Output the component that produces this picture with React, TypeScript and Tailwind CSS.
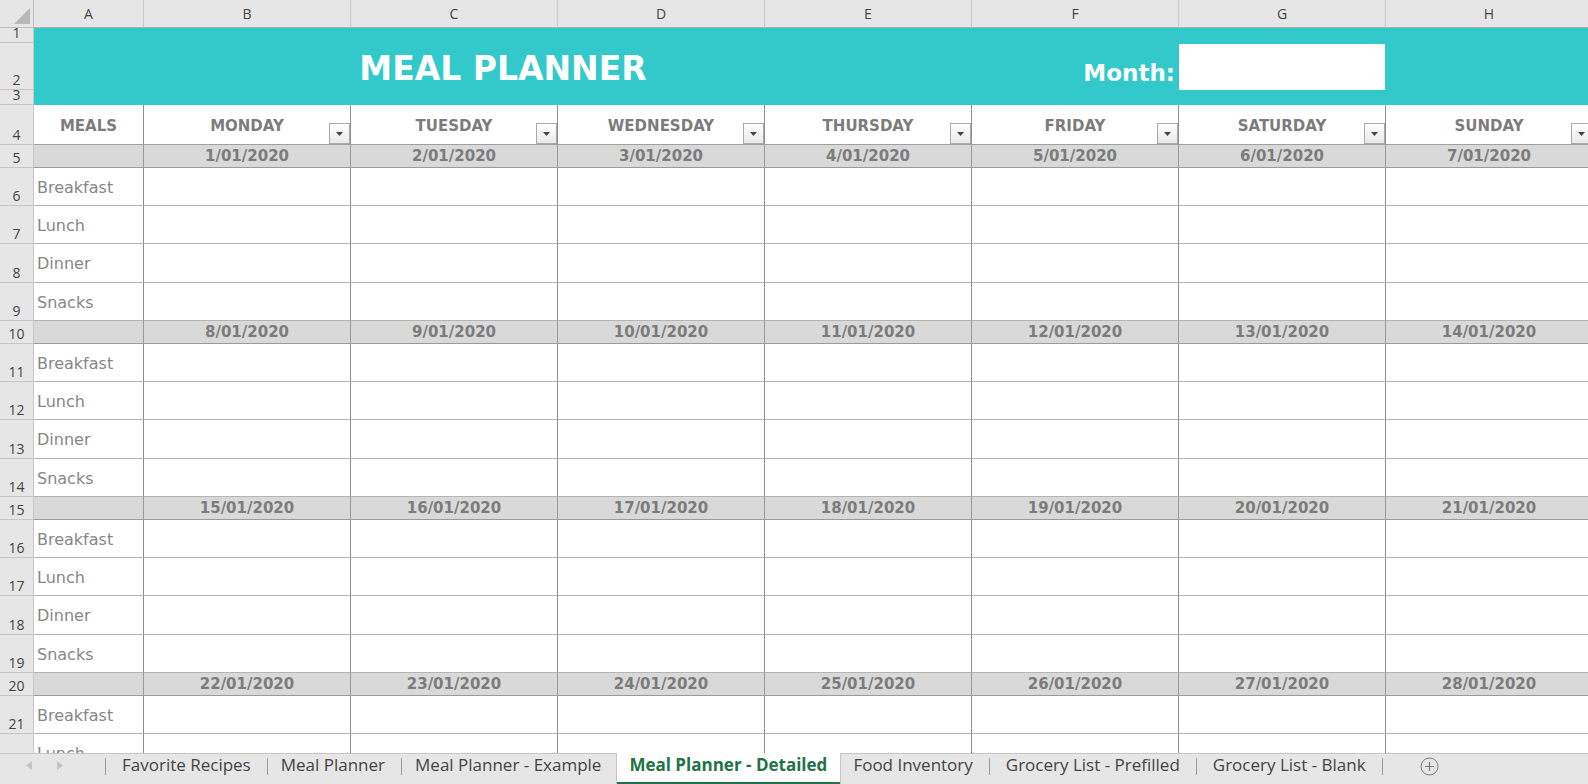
import React from "react";

const cols = ["A", "B", "C", "D", "E", "F", "G", "H"];
const days = ["MONDAY", "TUESDAY", "WEDNESDAY", "THURSDAY", "FRIDAY", "SATURDAY", "SUNDAY"];
const meals = ["Breakfast", "Lunch", "Dinner", "Snacks"];
const mealHeights = ["h-[38px]", "h-[38px]", "h-[39px]", "h-[38px]"];
const weekStarts = [1, 8, 15, 22];
const tabs = ["Favorite Recipes", "Meal Planner", "Meal Planner - Example", "Meal Planner - Detailed", "Food Inventory", "Grocery List - Prefilled", "Grocery List - Blank"];

const sheetFont = { fontFamily: '"DejaVu Sans", sans-serif' };

const RowNum = ({ n, h }: { n: number; h: string }) => (
  <div className={`w-[34px] shrink-0 ${h} bg-[#e6e6e6] border-b border-r border-[#c6c6c6] flex items-end justify-center pb-[2px] text-[14px] leading-none text-[#444] font-['Open_Sans',sans-serif]`}>
    {n}
  </div>
);

const FilterButton = () => (
  <div className="absolute right-0 bottom-0 w-[21px] h-[21px] border border-[#a9a9a9] bg-gradient-to-b from-white to-[#e9e9e9] flex items-center justify-center">
    <svg width="7" height="4" viewBox="0 0 7 4">
      <path d="M0 0 L7 0 L3.5 4 Z" fill="#444" />
    </svg>
  </div>
);

const DateRow = ({ rowNo, start }: { rowNo: number; start: number }) => (
  <div className="flex">
    <RowNum n={rowNo} h="h-[23px]" />
    <div className="w-[110px] shrink-0 h-[23px] bg-[#d9d9d9] border-r border-b border-[#9a9a9a]" />
    {days.map((d, i) => (
      <div key={d} className="w-[207px] shrink-0 h-[23px] bg-[#d9d9d9] border-r border-b border-[#9a9a9a] flex items-center justify-center pt-[1px] text-[15px] font-bold text-[#7c7c7c]">
        {start + i}/01/2020
      </div>
    ))}
  </div>
);

const MealRow = ({ rowNo, meal, h }: { rowNo: number; meal: string; h: string }) => (
  <div className="flex">
    <RowNum n={rowNo} h={h} />
    <div className={`w-[110px] shrink-0 ${h} bg-white border-r border-r-[#8f8f8f] border-b border-b-[#b4b4b4] flex items-center pl-[3px] pt-[2px] text-[16px] text-[#878787]`}>
      {meal}
    </div>
    {days.map((d) => (
      <div key={d} className={`w-[207px] shrink-0 ${h} bg-white border-r border-r-[#8f8f8f] border-b border-b-[#b4b4b4]`} />
    ))}
  </div>
);

const Sep = () => <div className="w-px bg-[#9a9a9a] mt-[4px] mb-[9px]" />;

export default function App() {
  let rowNo = 5;
  const blocks = weekStarts.map((start) => {
    const dateRow = rowNo;
    rowNo += 5;
    return { start, dateRow };
  });

  return (
    <div className="w-[1588px] h-[784px] overflow-hidden flex flex-col bg-white" style={sheetFont}>
      <div className="flex-1 overflow-hidden">
        {/* column letters */}
        <div className="flex h-[28px]">
          <div className="w-[34px] shrink-0 h-[28px] bg-[#e6e6e6] border-r border-b border-[#bdbdbd] relative">
            <svg className="absolute right-[3px] bottom-[3px]" width="16" height="16" viewBox="0 0 16 16">
              <path d="M16 0 L16 16 L0 16 Z" fill="#b7b7b7" />
            </svg>
          </div>
          {cols.map((c, i) => (
            <div key={c} className={`${i === 0 ? "w-[110px]" : "w-[207px]"} shrink-0 h-[28px] bg-[#e6e6e6] border-r border-r-[#c9c9c9] border-b border-b-[#ababab] flex items-center justify-center text-[14px] text-[#444] font-['Open_Sans',sans-serif]`}>
              {c}
            </div>
          ))}
        </div>

        {/* title rows 1-3 */}
        <div className="flex">
          <div className="flex flex-col">
            <RowNum n={1} h="h-[15px]" />
            <RowNum n={2} h="h-[47px]" />
            <RowNum n={3} h="h-[15px]" />
          </div>
          <div className="flex-1 h-[77px] bg-[#33c9ca] flex items-start">
            <div className="w-[938px] shrink-0 h-[62px] flex items-center justify-center pt-[18px] text-white font-bold text-[33px] leading-none">
              MEAL PLANNER
            </div>
            <div className="w-[207px] shrink-0 h-[62px] flex items-center justify-end pr-[4px] pt-[28px] text-white font-bold text-[23px] leading-none">
              Month:
            </div>
            <div className="w-[206px] shrink-0 h-[46px] mt-[16px] bg-white" />
          </div>
        </div>

        {/* day headers row 4 */}
        <div className="flex">
          <RowNum n={4} h="h-[40px]" />
          <div className="w-[110px] shrink-0 h-[40px] border-r border-r-[#8f8f8f] border-b border-b-[#a0a0a0] flex items-center justify-center pt-[3px] text-[15px] font-bold text-[#7c7c7c]">
            MEALS
          </div>
          {days.map((d) => (
            <div key={d} className="relative w-[207px] shrink-0 h-[40px] border-r border-r-[#8f8f8f] border-b border-b-[#a0a0a0] flex items-center justify-center pt-[3px] text-[15px] font-bold text-[#7c7c7c]">
              {d}
              <FilterButton />
            </div>
          ))}
        </div>

        {blocks.map(({ start, dateRow }) => (
          <div key={start}>
            <DateRow rowNo={dateRow} start={start} />
            {meals.map((m, i) => (
              <MealRow key={m} rowNo={dateRow + 1 + i} meal={m} h={mealHeights[i]} />
            ))}
          </div>
        ))}
      </div>

      {/* sheet tabs */}
      <div className="h-[31px] shrink-0 bg-[#e6e6e6] border-t border-[#c6c6c6] flex items-stretch font-['Open_Sans',sans-serif] text-[17px] text-[#444]">
        <div className="w-[105px] shrink-0 flex items-center gap-[25px] pl-[26px] pb-[7px]">
          <svg width="6" height="9" viewBox="0 0 6 9"><path d="M6 0 L0 4.5 L6 9 Z" fill="#c4c4c4" /></svg>
          <svg width="6" height="9" viewBox="0 0 6 9"><path d="M0 0 L6 4.5 L0 9 Z" fill="#c4c4c4" /></svg>
        </div>
        <Sep />
        {tabs.map((t, i) => {
          const active = t === "Meal Planner - Detailed";
          const nextActive = tabs[i + 1] === "Meal Planner - Detailed";
          return (
            <React.Fragment key={t}>
              {active ? (
                <div className="-mt-px bg-white border-b-2 border-[#217346] pl-[12px] pr-[13px] flex items-center pb-[6px] font-bold text-[#217346] shadow-[1px_0_0_#c6c6c6,-1px_0_0_#c6c6c6]">
                  {t}
                </div>
              ) : (
                <div className={`${i === 0 || i >= 5 ? "pl-[16px]" : "pl-[13px]"} pr-[16px] flex items-center pb-[8px]`}>{t}</div>
              )}
              {!active && !nextActive && <Sep />}
            </React.Fragment>
          );
        })}
        <div className="pl-[37px] flex items-center pb-[5px]">
          <svg width="19" height="19" viewBox="0 0 19 19">
            <circle cx="9.5" cy="9.5" r="8.5" fill="none" stroke="#7a7a7a" strokeWidth="1" />
            <path d="M9.5 5 V14 M5 9.5 H14" stroke="#7a7a7a" strokeWidth="1.2" />
          </svg>
        </div>
      </div>
    </div>
  );
}
